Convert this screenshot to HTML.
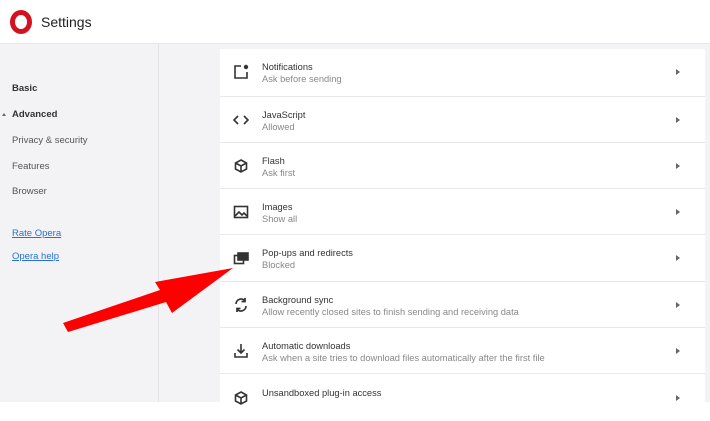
<!DOCTYPE html><html><head><style>
*{margin:0;padding:0;box-sizing:border-box}
body{width:710px;height:409px;overflow:hidden;background:#fff;font-family:"Liberation Sans",sans-serif;position:relative}
#hdr{position:absolute;left:0;top:0;width:710px;height:44px;background:#fff;border-bottom:1px solid #e6e6ea}
#logo{position:absolute;left:10px;top:10px;width:22px;height:24px;border-radius:50%;border:5px solid #d4121e}
#title{position:absolute;left:41px;top:14px;font-size:14px;color:#222}
#main{position:absolute;left:0;top:44px;width:710px;height:358px;background:#f3f3f6}
#side{position:absolute;left:0;top:44px;width:159px;height:358px;border-right:1px solid #e4e4e8}
.nav{position:absolute;left:12px;font-size:9.5px;color:#555}
.b{font-weight:bold;color:#333}
.lnk{color:#2a6fd6;text-decoration:underline}
#card{position:absolute;left:220px;top:49px;width:485px;height:353px;background:#fff}
.row{position:absolute;left:0;width:485px;height:46px;border-bottom:1px solid #e8e8ea}
.t{position:absolute;left:42px;top:13px;font-size:9.3px;color:#333}
.s{position:absolute;left:42px;top:25px;font-size:9.3px;color:#888}
.ar{position:absolute;left:456px;top:20px;width:0;height:0;border-left:4px solid #666;border-top:3px solid transparent;border-bottom:3px solid transparent}
.ic{position:absolute;left:13px;top:15px}
</style></head><body>
<div id="hdr"><div id="logo"></div><div id="title">Settings</div></div>
<div id="main"></div>
<div id="side">
<div class="nav b" style="top:39px">Basic</div>
<div class="nav b" style="top:65px">Advanced</div>
<div style="position:absolute;left:2px;top:69px;width:0;height:0;border-bottom:3px solid #666;border-left:2px solid transparent;border-right:2px solid transparent"></div>
<div class="nav" style="top:91px">Privacy &amp; security</div>
<div class="nav" style="top:117px">Features</div>
<div class="nav" style="top:142px">Browser</div>
<div class="nav lnk" style="top:184px">Rate Opera</div>
<div class="nav lnk" style="top:207px">Opera help</div>
</div>
<div id="card">
<div class="row" style="top:0;height:48px"><svg class="ic" width="16" height="16" viewBox="0 0 16 16" fill="none" stroke="#333" stroke-width="1.6"><path d="M8 2H2v12h12V8"/><circle cx="13" cy="3" r="2.2" fill="#333" stroke="none"/></svg><div class="t">Notifications</div><div class="s">Ask before sending</div><div class="ar"></div></div>
<div class="row" style="top:48px"><svg class="ic" width="16" height="16" viewBox="0 0 16 16" fill="none" stroke="#333" stroke-width="1.6"><path d="M5 4L1 8l4 4M11 4l4 4-4 4"/></svg><div class="t">JavaScript</div><div class="s">Allowed</div><div class="ar"></div></div>
<div class="row" style="top:94px"><svg class="ic" width="16" height="16" viewBox="0 0 16 16" fill="none" stroke="#333" stroke-width="1.6"><path d="M8 2l5.5 3v6L8 14l-5.5-3V5zM2.5 5L8 8l5.5-3M8 8v6"/></svg><div class="t">Flash</div><div class="s">Ask first</div><div class="ar"></div></div>
<div class="row" style="top:140px"><svg class="ic" width="16" height="16" viewBox="0 0 16 16" fill="none" stroke="#333" stroke-width="1.6"><rect x="1.5" y="2.5" width="13" height="11"/><path d="M2 12l4-4 3 3 2-2 3 3"/></svg><div class="t">Images</div><div class="s">Show all</div><div class="ar"></div></div>
<div class="row" style="top:186px;height:47px"><svg class="ic" width="16" height="16" viewBox="0 0 16 16" fill="none" stroke="#333" stroke-width="1.6"><rect x="1.5" y="5.5" width="9" height="8"/><rect x="5" y="3" width="10" height="7" fill="#333"/></svg><div class="t">Pop-ups and redirects</div><div class="s">Blocked</div><div class="ar"></div></div>
<div class="row" style="top:233px"><svg class="ic" width="16" height="16" viewBox="0 0 16 16" fill="none" stroke="#333" stroke-width="1.7"><path d="M3 7a5 5 0 0 1 9-3M13 9a5 5 0 0 1-9 3"/><path d="M12 1v3.5H8.5M4 15v-3.5h3.5"/></svg><div class="t">Background sync</div><div class="s">Allow recently closed sites to finish sending and receiving data</div><div class="ar"></div></div>
<div class="row" style="top:279px"><svg class="ic" width="16" height="16" viewBox="0 0 16 16" fill="none" stroke="#333" stroke-width="1.6"><path d="M8 1v9M4.5 6.5L8 10l3.5-3.5M2 10v4h12v-4"/></svg><div class="t">Automatic downloads</div><div class="s">Ask when a site tries to download files automatically after the first file</div><div class="ar"></div></div>
<div class="row" style="top:326px;border:none"><svg class="ic" width="16" height="16" viewBox="0 0 16 16" fill="none" stroke="#333" stroke-width="1.6"><path d="M8 2l5.5 3v6L8 14l-5.5-3V5zM2.5 5L8 8l5.5-3M8 8v6"/></svg><div class="t" style="top:13px">Unsandboxed plug-in access</div><div class="ar"></div></div>
</div>
<svg style="position:absolute;left:0;top:0" width="710" height="409"><path d="M63 323L160 290L155 282L233 268L172 313L166 302L68 332Z" fill="#f00"/></svg>
</body></html>
